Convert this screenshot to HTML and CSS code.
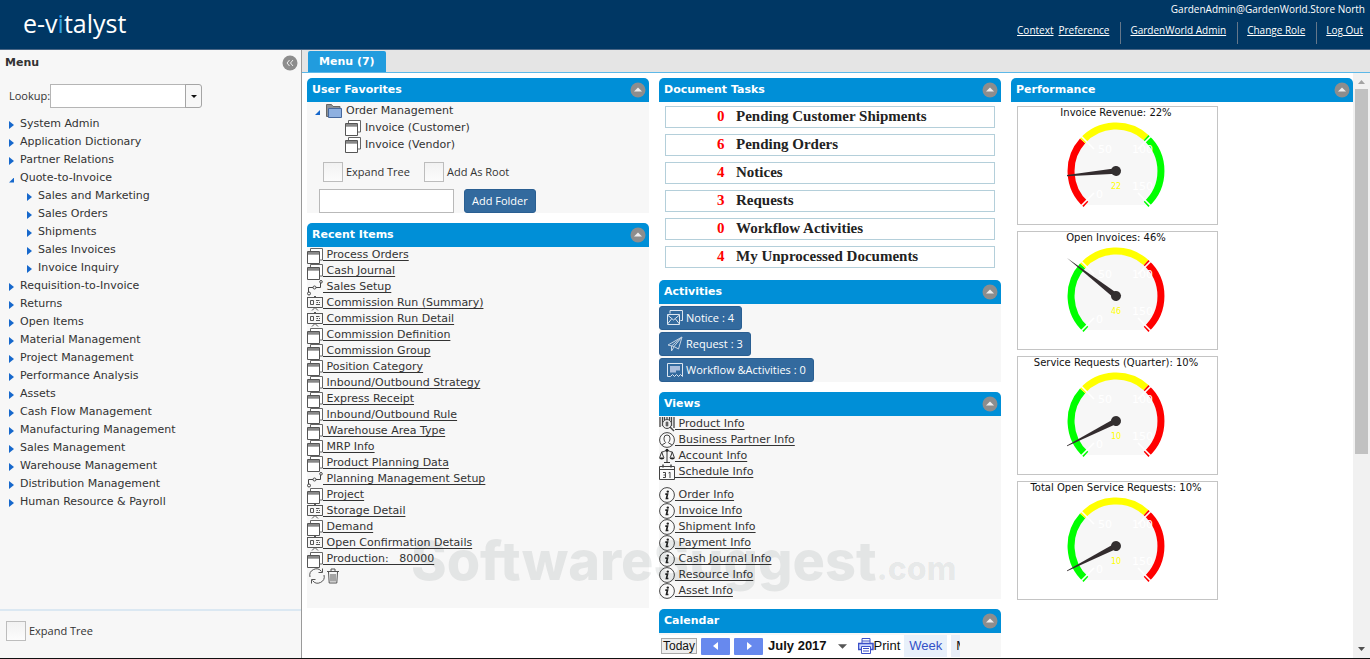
FILE: index.html
```
<!DOCTYPE html>
<html lang="en">
<head>
<meta charset="utf-8">
<title>e-vitalyst</title>
<link rel="stylesheet" href="styles.css">
</head>
<body>
<svg class="defs" aria-hidden="true">
  <defs>
    <symbol id="win" viewBox="0 0 16 16">
      <path d="M3.500 3V.5h12v11.500h-3" fill="#fff" stroke="#666"/>
      <path d="M.5 3.500h12v12H.5z" fill="#fff" stroke="#555"/>
      <path d="M1 4h11v2H1z" fill="#888"/><path d="M1 6.500h11" stroke="#aaa"/>
    </symbol>
    <symbol id="flow" viewBox="0 0 16 16">
      <g fill="#f7f7f7" stroke="#444"><path d="M1.500 12V7.500H13.500V3" fill="none"/>
      <circle cx="2" cy="13.500" r="1.500"/><circle cx="7.500" cy="7.500" r="1.500"/><circle cx="14" cy="1.800" r="1.300"/></g>
    </symbol>
    <symbol id="report" viewBox="0 0 16 16">
      <path d="M.5 1.500h15v10H.5zM0 1.500h16" fill="#f7f7f7" stroke="#555"/>
      <path d="M3.500 4.500h3v4h-3zM9 4.500h3.500M9.500 6.500h1.500M12 6.500h1M9 8.500h4" fill="none" stroke="#555"/>
      <path d="M5 14.500l3-3 3 3M7 .5h2" fill="none" stroke="#555"/>
    </symbol>
    <symbol id="info" viewBox="0 0 16 16">
      <circle cx="8" cy="8" r="7.400" fill="#fafafa" stroke="#444"/>
      <circle cx="8.800" cy="4.600" r="1.200" fill="#222"/><path d="M6.300 7.200H8.500l-1 4.300h1.900" fill="none" stroke="#222" stroke-width="1.700"/>
    </symbol>
    <symbol id="product" viewBox="0 0 16 16">
      <path d="M1 1v10M3.500 1v9M5.500 1v3M8 1v2M10.500 1v3M12.500 1v9M15 1v11" stroke="#444" stroke-width="1.300"/>
      <circle cx="8" cy="8" r="4.500" fill="#eee" stroke="#444"/><path d="M11 11l4 4" stroke="#444" stroke-width="1.500"/>
      <path d="M8 5.500v5M6.500 7h3M6.500 9h3" stroke="#333"/>
    </symbol>
    <symbol id="partner" viewBox="0 0 16 16">
      <circle cx="8" cy="8" r="7.400" fill="#fafafa" stroke="#444"/>
      <path d="M3 13.200c.6-1.600 3.600-1.400 3.600-2.700C5 9 5 7 5 6a3 3 0 0 1 6 0c0 1 0 3-1.600 4.500 0 1.300 3 1.100 3.600 2.700" fill="none" stroke="#444"/>
    </symbol>
    <symbol id="account" viewBox="0 0 16 16">
      <path d="M8 1v13M5 14.500h6M2.500 4C5 4 6 2.500 8 2.500S11 4 13.500 4M2.700 4L.7 9.500M2.700 4l2 5.500M13.300 4l-2 5.500M13.300 4l2 5.500" fill="none" stroke="#333"/>
      <path d="M0 9.500h5.500a2.800 2.500 0 0 1-5.500 0zM10.500 9.500H16a2.800 2.500 0 0 1-5.500 0z" fill="#222"/><circle cx="8" cy="2.300" r="1.500" fill="#222"/>
    </symbol>
    <symbol id="schedule" viewBox="0 0 16 16">
      <path d="M.5 2.500h15v13H.5zM.5 5.500h15" fill="#fafafa" stroke="#444"/><path d="M4 .5v3M12 .5v3" stroke="#444" stroke-width="1.500"/>
      <path d="M4 8.500h2.500v5H4M4.500 11h2M9.500 9l1.500-.8V14" fill="none" stroke="#444"/>
    </symbol>
    <symbol id="collapse" viewBox="0 0 16 16"><circle cx="8" cy="8" r="7.500" fill="#8d8d8d"/><path d="M4 9.500L8 5.500l4 4z" fill="#eee"/></symbol>
    <g id="scale">
      <path d="M-34.600 34A48 48 0 1 1 34.600 34z" fill="#f7f7f7"/>
    </g>
    <g id="ticks">
      <path d="M-22 22L-35 35M-22-22L-35-35M22-22L35-35M22 22L35 35" stroke="#fff" stroke-width="1.600"/>
      <g class="scale-text"><text x="-20" y="27">0</text><text x="-18" y="-18">50</text><text x="16" y="-18">100</text><text x="16" y="19">150</text></g>
    </g>
    <g id="needle"><path d="M0-2.800L-62 0 0 2.800z" fill="#332c2e"/><circle r="5" fill="#332f30"/></g>
    <path id="arc-low" d="M-30.100 33.400A45 45 0 0 1-33.400-30.100"/>
    <path id="arc-mid" d="M-33.400-30.100A45 45 0 0 1 30.100-33.400"/>
    <path id="arc-high" d="M30.100-33.400A45 45 0 0 1 30.100 33.400"/>
  </defs>
</svg>

<div class="app">
  <header class="top">
    <div class="logo">e-v<span>i</span>talyst</div>
    <div class="account">
      <div class="user">GardenAdmin@GardenWorld.Store North</div>
      <nav class="links">
        <div><a href="#">Context</a><a href="#">Preference</a></div>
        <div><a href="#">GardenWorld Admin</a></div>
        <div><a href="#">Change Role</a></div>
        <div><a href="#">Log Out</a></div>
      </nav>
    </div>
  </header>

  <div class="body">
    <aside class="side">
      <div class="side-head"><h2>Menu</h2>
        <button class="round" aria-label="Collapse menu"><svg viewBox="0 0 16 16"><circle cx="8" cy="8" r="7.500" fill="#8d8d8d"/><path d="M7.500 5L5 8l2.500 3M11 5L8.500 8l2.500 3" fill="none" stroke="#eee"/></svg></button>
      </div>
      <div class="lookup"><label for="lookup">Lookup:</label><input id="lookup" type="text"><button aria-label="Open list"><svg viewBox="0 0 8 4"><path d="M0 0h8L4 4z" fill="#111"/></svg></button></div>
      <ul class="menu">
        <li>System Admin</li><li>Application Dictionary</li><li>Partner Relations</li>
        <li class="open">Quote-to-Invoice</li>
        <li class="sub">Sales and Marketing</li><li class="sub">Sales Orders</li><li class="sub">Shipments</li><li class="sub">Sales Invoices</li><li class="sub">Invoice Inquiry</li>
        <li>Requisition-to-Invoice</li><li>Returns</li><li>Open Items</li><li>Material Management</li><li>Project Management</li><li>Performance Analysis</li><li>Assets</li><li>Cash Flow Management</li><li>Manufacturing Management</li><li>Sales Management</li><li>Warehouse Management</li><li>Distribution Management</li><li>Human Resource &amp; Payroll</li>
      </ul>
      <div class="side-foot"><label class="check"><input type="checkbox">Expand Tree</label></div>
    </aside>

    <main class="main">
      <div class="tabs"><button class="tab">Menu (7)</button></div>
      <div class="stage">
        <div class="board">
          <div class="col">
            <section class="panel">
              <header><h3>User Favorites</h3><button class="round" aria-label="Collapse"><svg><use href="#collapse"/></svg></button></header>
              <div class="content favorites">
                <ul class="tree">
                  <li class="open"><svg class="ico" viewBox="0 0 16 16"><path d="M.5 13.500V1.500h5l1.500 2h7v10z" fill="#8a8f96" stroke="#666"/><path d="M2.500 5.500h13v9h-13z" fill="#8eb0e0" stroke="#45679c"/></svg>Order Management</li>
                  <li class="leaf"><svg class="ico"><use href="#win"/></svg>Invoice (Customer)</li>
                  <li class="leaf"><svg class="ico"><use href="#win"/></svg>Invoice (Vendor)</li>
                </ul>
                <div class="checks"><label class="check"><input type="checkbox">Expand Tree</label><label class="check"><input type="checkbox">Add As Root</label></div>
                <div class="add"><input type="text" aria-label="Folder name"><button class="btn">Add Folder</button></div>
              </div>
            </section>
            <section class="panel">
              <header><h3>Recent Items</h3><button class="round" aria-label="Collapse"><svg><use href="#collapse"/></svg></button></header>
              <div class="content recent">
                <ul class="links-list">
                  <li><a href="#"><svg class="ico"><use href="#win"/></svg>&nbsp;Process Orders</a></li>
                  <li><a href="#"><svg class="ico"><use href="#win"/></svg>&nbsp;Cash Journal</a></li>
                  <li><a href="#"><svg class="ico"><use href="#flow"/></svg>&nbsp;Sales Setup</a></li>
                  <li><a href="#"><svg class="ico"><use href="#report"/></svg>&nbsp;Commission Run (Summary)</a></li>
                  <li><a href="#"><svg class="ico"><use href="#report"/></svg>&nbsp;Commission Run Detail</a></li>
                  <li><a href="#"><svg class="ico"><use href="#win"/></svg>&nbsp;Commission Definition</a></li>
                  <li><a href="#"><svg class="ico"><use href="#win"/></svg>&nbsp;Commission Group</a></li>
                  <li><a href="#"><svg class="ico"><use href="#win"/></svg>&nbsp;Position Category</a></li>
                  <li><a href="#"><svg class="ico"><use href="#win"/></svg>&nbsp;Inbound/Outbound Strategy</a></li>
                  <li><a href="#"><svg class="ico"><use href="#win"/></svg>&nbsp;Express Receipt</a></li>
                  <li><a href="#"><svg class="ico"><use href="#win"/></svg>&nbsp;Inbound/Outbound Rule</a></li>
                  <li><a href="#"><svg class="ico"><use href="#win"/></svg>&nbsp;Warehouse Area Type</a></li>
                  <li><a href="#"><svg class="ico"><use href="#win"/></svg>&nbsp;MRP Info</a></li>
                  <li><a href="#"><svg class="ico"><use href="#win"/></svg>&nbsp;Product Planning Data</a></li>
                  <li><a href="#"><svg class="ico"><use href="#flow"/></svg>&nbsp;Planning Management Setup</a></li>
                  <li><a href="#"><svg class="ico"><use href="#win"/></svg>&nbsp;Project</a></li>
                  <li><a href="#"><svg class="ico"><use href="#report"/></svg>&nbsp;Storage Detail</a></li>
                  <li><a href="#"><svg class="ico"><use href="#win"/></svg>&nbsp;Demand</a></li>
                  <li><a href="#"><svg class="ico"><use href="#report"/></svg>&nbsp;Open Confirmation Details</a></li>
                  <li><a href="#"><svg class="ico"><use href="#win"/></svg>&nbsp;Production: &nbsp; 80000</a></li>
                </ul>
                <div class="tools">
                  <button aria-label="Refresh"><svg viewBox="0 0 16 16"><g fill="none" stroke="#555"><path d="M1 9a6.500 6.500 0 0 1 11.500-5.500M15 7a6.500 6.500 0 0 1-11.500 5.500M13.500.5v4h-4M2.500 15.500v-4h4"/></g></svg></button>
                  <button aria-label="Delete"><svg viewBox="0 0 16 16"><g fill="none" stroke="#555"><path d="M2 3.500h12M6 3V1h4v2M3.500 4l.7 11h7.600l.7-11M6 6v7.500M8 6v7.500M10 6v7.500"/></g></svg></button>
                </div>
              </div>
            </section>
          </div>

          <div class="col">
            <section class="panel">
              <header><h3>Document Tasks</h3><button class="round" aria-label="Collapse"><svg><use href="#collapse"/></svg></button></header>
              <ul class="tasks">
                <li><b>0</b>Pending Customer Shipments</li><li><b>6</b>Pending Orders</li><li><b>4</b>Notices</li><li><b>3</b>Requests</li><li><b>0</b>Workflow Activities</li><li><b>4</b>My Unprocessed Documents</li>
              </ul>
            </section>
            <section class="panel">
              <header><h3>Activities</h3><button class="round" aria-label="Collapse"><svg><use href="#collapse"/></svg></button></header>
              <div class="content activities">
                <button class="btn"><svg viewBox="0 0 16 16"><g fill="none" stroke="#dde6f0"><path d="M3 3.500v-3h12.500v10h-2M.5 4.500h12v10H.5zM.5 5l6 5 6-5M.5 14l4-5M12.500 14l-4-5"/></g></svg>Notice : 4</button>
                <button class="btn"><svg viewBox="0 0 16 16"><g fill="none" stroke="#c5d3e2"><path d="M1 9l14-8-3.500 12L7 10.500zM15 1L4.500 10v5L7 11M15 1L7 10.500"/></g></svg>Request : 3</button>
                <button class="btn"><svg viewBox="0 0 16 16"><path d="M.5 14.500V1.500h15v13l-2-2-2 2-2-2-2 2-2-2-2 2z" fill="none" stroke="#dde6f0"/><path d="M3 4h10v4.500h-4V10.500H3z" fill="#a9bddc"/></svg>Workflow &amp;Activities : 0</button>
              </div>
            </section>
            <section class="panel">
              <header><h3>Views</h3><button class="round" aria-label="Collapse"><svg><use href="#collapse"/></svg></button></header>
              <div class="content views">
                <ul class="links-list">
                  <li><a href="#"><svg class="ico"><use href="#product"/></svg>&nbsp;Product Info</a></li>
                  <li><a href="#"><svg class="ico"><use href="#partner"/></svg>&nbsp;Business Partner Info</a></li>
                  <li><a href="#"><svg class="ico"><use href="#account"/></svg>&nbsp;Account Info</a></li>
                  <li><a href="#"><svg class="ico"><use href="#schedule"/></svg>&nbsp;Schedule Info</a></li>
                </ul>
                <ul class="links-list">
                  <li><a href="#"><svg class="ico"><use href="#info"/></svg>&nbsp;Order Info</a></li>
                  <li><a href="#"><svg class="ico"><use href="#info"/></svg>&nbsp;Invoice Info</a></li>
                  <li><a href="#"><svg class="ico"><use href="#info"/></svg>&nbsp;Shipment Info</a></li>
                  <li><a href="#"><svg class="ico"><use href="#info"/></svg>&nbsp;Payment Info</a></li>
                  <li><a href="#"><svg class="ico"><use href="#info"/></svg>&nbsp;Cash Journal Info</a></li>
                  <li><a href="#"><svg class="ico"><use href="#info"/></svg>&nbsp;Resource Info</a></li>
                  <li><a href="#"><svg class="ico"><use href="#info"/></svg>&nbsp;Asset Info</a></li>
                </ul>
              </div>
            </section>
            <section class="panel">
              <header><h3>Calendar</h3><button class="round" aria-label="Collapse"><svg><use href="#collapse"/></svg></button></header>
              <div class="calendar">
                <div class="cal-tools">
                  <button class="today">Today</button>
                  <button class="step" aria-label="Previous"><svg viewBox="0 0 6 8"><path d="M5 0v8L0 4z" fill="#fff"/></svg></button>
                  <button class="step" aria-label="Next"><svg viewBox="0 0 6 8"><path d="M1 0v8l5-4z" fill="#fff"/></svg></button>
                  <strong>July 2017</strong>
                  <svg class="drop" viewBox="0 0 10 5"><path d="M0 0h10L5 5z" fill="#555"/></svg>
                  <button class="print"><svg viewBox="0 0 16 16"><g fill="#fff" stroke="#3c50c8"><path d="M4 5V.5h8V5M4 3h8"/><path d="M.5 5.500h14.500v6H.5z" fill="#cdd8ff" stroke-width="1.500"/><path d="M3.500 8.500h9v7h-9zM5 10.500h6M5 13h6"/></g></svg>Print</button>
                  <button class="mode week">Week</button>
                  <button class="mode month">Month</button>
                </div>
              </div>
            </section>
          </div>

          <div class="col">
            <section class="panel">
              <header><h3>Performance</h3><button class="round" aria-label="Collapse"><svg><use href="#collapse"/></svg></button></header>
              <div class="gauges">
                <figure><figcaption>Invoice Revenue: 22%</figcaption>
                  <svg viewBox="-49 -49 98 90"><use href="#scale"/><g class="arc"><use href="#arc-low" stroke="#f00"/><use href="#arc-mid" stroke="#ff0"/><use href="#arc-high" stroke="#0f0"/></g><use href="#ticks"/><text class="value" y="18">22</text><use href="#needle" transform="rotate(-5.400)"/></svg></figure>
                <figure><figcaption>Open Invoices: 46%</figcaption>
                  <svg viewBox="-49 -49 98 90"><use href="#scale"/><g class="arc"><use href="#arc-low" stroke="#0f0"/><use href="#arc-mid" stroke="#ff0"/><use href="#arc-high" stroke="#f00"/></g><use href="#ticks"/><text class="value" y="18">46</text><use href="#needle" transform="rotate(37.800)"/></svg></figure>
                <figure><figcaption>Service Requests (Quarter): 10%</figcaption>
                  <svg viewBox="-49 -49 98 90"><use href="#scale"/><g class="arc"><use href="#arc-low" stroke="#0f0"/><use href="#arc-mid" stroke="#ff0"/><use href="#arc-high" stroke="#f00"/></g><use href="#ticks"/><text class="value" y="18">10</text><use href="#needle" transform="rotate(-27)"/></svg></figure>
                <figure><figcaption>Total Open Service Requests: 10%</figcaption>
                  <svg viewBox="-49 -49 98 90"><use href="#scale"/><g class="arc"><use href="#arc-low" stroke="#0f0"/><use href="#arc-mid" stroke="#ff0"/><use href="#arc-high" stroke="#f00"/></g><use href="#ticks"/><text class="value" y="18">10</text><use href="#needle" transform="rotate(-27)"/></svg></figure>
              </div>
            </section>
          </div>
        </div>
        <div class="scroll" aria-hidden="true">
          <svg viewBox="0 0 7 4"><path d="M0 4h7L3.500 0z" fill="#a3a3a3"/></svg>
          <div class="track"><div class="thumb"></div></div>
          <svg viewBox="0 0 7 4"><path d="M0 0h7L3.500 4z" fill="#505050"/></svg>
        </div>
        <div class="watermark" aria-hidden="true">SoftwareSuggest<small>.com</small></div>
      </div>
    </main>
  </div>
</div>
</body>
</html>
```
FILE: styles.css
```
* { box-sizing: border-box; }
body { margin: 0; font: 11px/16px "DejaVu Sans", sans-serif; color: #333; background: #fff; }
ul { margin: 0; padding: 0; list-style: none; }
h2, h3 { margin: 0; font-size: 11px; }
button { padding: 0; border: 0; background: none; font: inherit; color: inherit; }
input { margin: 0; }
svg { display: block; flex: none; }
.defs { position: absolute; width: 0; height: 0; }

.app { display: flex; flex-direction: column; height: 100vh; border-bottom: 1px solid #111; overflow: hidden; }

.top { display: flex; justify-content: space-between; height: 50px; flex: none; padding: 0 5px 0 23px; background: #003764; border-bottom: 1px solid #4a6685; color: #fff; font-family: "Open Sans", sans-serif; }
.logo { font-size: 25px; line-height: 46px; }
.logo span { color: #2ea3e6; }
.account { font-size: 10px; text-align: right; }
.user { line-height: 19px; }
.links { display: flex; justify-content: flex-end; padding-top: 3px; line-height: 16px; }
.links div { display: flex; gap: 5px; height: 22px; padding: 0 11px 0 9px; border-left: 1px solid #65778a; }
.links div:first-child { border-left: 0; }
.links div:last-child { padding-right: 2px; }
.links a { color: #fff; }

.body { display: flex; flex: 1; min-height: 0; }
.side { display: flex; flex-direction: column; width: 302px; flex: none; background: #f7f7f7; border-right: 1px solid #9a9a9a; }
.side-head { display: flex; justify-content: space-between; align-items: center; height: 26px; padding: 0 3px 0 5px; }
.round, .round svg { width: 16px; height: 16px; }
.lookup { display: flex; align-items: center; padding: 8px 9px 7px; font-family: "Open Sans", sans-serif; }
.lookup input { width: 136px; height: 24px; border: 1px solid #b5b5b5; background: #fff; }
.lookup button { display: flex; align-items: center; justify-content: center; width: 17px; height: 24px; margin-left: -1px; border: 1px solid #a5a5a5; border-radius: 0 3px 3px 0; }
.lookup button svg { width: 6px; height: 3px; }
.menu { flex: 1; }
.menu li { display: flex; align-items: center; height: 18px; padding-left: 9px; }
.menu .sub { padding-left: 27px; }
.menu li::before { content: ""; width: 5px; height: 8px; margin: 2px 6px 0 0; background: #1668cc; clip-path: polygon(0 0, 100% 50%, 0 100%); }
.menu .open::before, .tree .open::before { content: ""; width: 5px; height: 5px; margin: 4px 6px 0 0; background: #1668cc; clip-path: polygon(100% 0, 100% 100%, 0 100%); }
.side-foot { height: 49px; padding: 10px 6px; border-top: 2px solid #dbe8f2; }
.check { display: inline-flex; align-items: center; gap: 3px; font-family: "Open Sans", sans-serif; }
.check input { appearance: none; width: 20px; height: 20px; border: 1px solid #bdbdbd; background: linear-gradient(#f2f2f2, #fcfcfc); }

.main { display: flex; flex-direction: column; flex: 1; min-width: 0; }
.tabs { display: flex; height: 23px; flex: none; padding: 1px 6px 0; background: #e5e5e5; border-bottom: 1px solid #5cb8e8; }
.tab { padding: 0 11px; border-radius: 2px 2px 0 0; background: #219cde; color: #fff; font-weight: bold; }
.stage { position: relative; display: flex; flex: 1; min-height: 0; overflow: hidden; }
.board { display: grid; grid-template-columns: repeat(3, minmax(0, 1fr)); gap: 10px; flex: 1; padding: 5px 0 0 5px; }
.col { display: flex; flex-direction: column; gap: 10px; }
.panel > header { display: flex; align-items: center; justify-content: space-between; height: 24px; padding: 0 3px 0 5px; background: #008fd7; border-radius: 5px 5px 0 0; color: #fff; }
.content { background: #f7f7f7; }
.ico { width: 16px; height: 16px; }

.tree li { display: flex; align-items: center; height: 17px; padding-left: 8px; }
.tree .ico { margin-right: 4px; }
.tree .leaf { padding-left: 38px; }
.checks { display: flex; gap: 14px; padding: 9px 16px 7px; }
.add { display: flex; gap: 10px; padding-left: 12px; }
.add input { width: 135px; height: 24px; border: 1px solid #b9b9b9; background: #fff; }
.btn { display: flex; align-items: center; height: 24px; padding: 0 7px; border: 1px solid #2a5f92; border-radius: 3px; background: #336a9e; color: #fff; font-family: "Open Sans", sans-serif; }
.recent { padding-bottom: 23px; }
.links-list li { height: 16px; }
.links-list a { display: inline-flex; color: #333; text-underline-offset: 2px; }
.recent .ico { margin-top: 1px; }
.tools { display: flex; align-items: center; height: 18px; padding-left: 2px; }
.tools svg { width: 16px; height: 16px; }

.tasks { display: flex; flex-direction: column; gap: 6px; padding: 4px 6px 2px; }
.tasks li { height: 22px; padding-left: 51px; border: 1px solid #b4cfda; color: #222; font: bold 15px/18px "Liberation Serif", serif; }
.tasks b { display: inline-block; width: 19px; color: #f00; }
.activities { display: flex; flex-direction: column; align-items: flex-start; gap: 2px; padding-top: 2px; }
.activities .btn { gap: 3px; }
.activities svg { width: 16px; height: 16px; }
.views { display: flex; flex-direction: column; gap: 7px; }

.calendar { display: flex; padding-top: 2px; background: #f7f7f7; }
.cal-tools { display: flex; align-items: center; width: 301px; height: 22px; padding-left: 2px; background: #fff; overflow: hidden; white-space: nowrap; font: 13px/20px "Liberation Sans", sans-serif; }
.cal-tools > * { flex: none; }
.today { height: 16px; padding: 0 1px; border: 1px solid #aaa; background: #eee; font-size: 12px; line-height: 14px; color: #111; }
.step { display: flex; align-items: center; justify-content: center; width: 29px; height: 17px; margin-left: 4px; border-radius: 1px; background: #6789ee; }
.step svg { width: 6px; height: 8px; }
.cal-tools strong { margin: 0 11px 0 5px; color: #111; }
.drop { width: 9px; height: 5px; }
.print { display: flex; align-items: center; margin: 0 4px 0 11px; color: #111; }
.print svg { width: 16px; height: 16px; }
.mode { height: 22px; padding: 0 5px; background: #e8f0fa; color: #3350c8; }
.month { margin-left: 4px; background: #e8eef8; color: #111; }

.gauges { display: flex; flex-direction: column; align-items: flex-start; gap: 6px; padding: 4px 6px; }
.gauges figure { width: 201px; height: 119px; margin: 0; padding-right: 3px; border: 1px solid #c4c4c4; text-align: center; color: #111; }
.gauges figcaption { font-size: 10px; line-height: 11px; }
.gauges svg { width: 98px; height: 90px; margin: 4px auto 0; }
.gauges text { font-size: 8px; text-anchor: middle; }
.scale-text { fill: #fff; }
.value { fill: #ff0; }
.arc { fill: none; stroke-width: 7px; }

.scroll { display: flex; flex-direction: column; align-items: center; width: 17px; padding: 7px 0; background: #f1f1f1; }
.scroll svg { width: 7px; height: 4px; }
.track { flex: 1; width: 13px; padding: 5px 0; }
.thumb { height: 66%; background: #c1c1c1; }
.watermark { position: absolute; left: 109px; top: 458px; font: 800 54px/60px Inter, sans-serif; color: rgba(0, 30, 30, .08); pointer-events: none; }
.watermark small { font-size: 32px; }
```
